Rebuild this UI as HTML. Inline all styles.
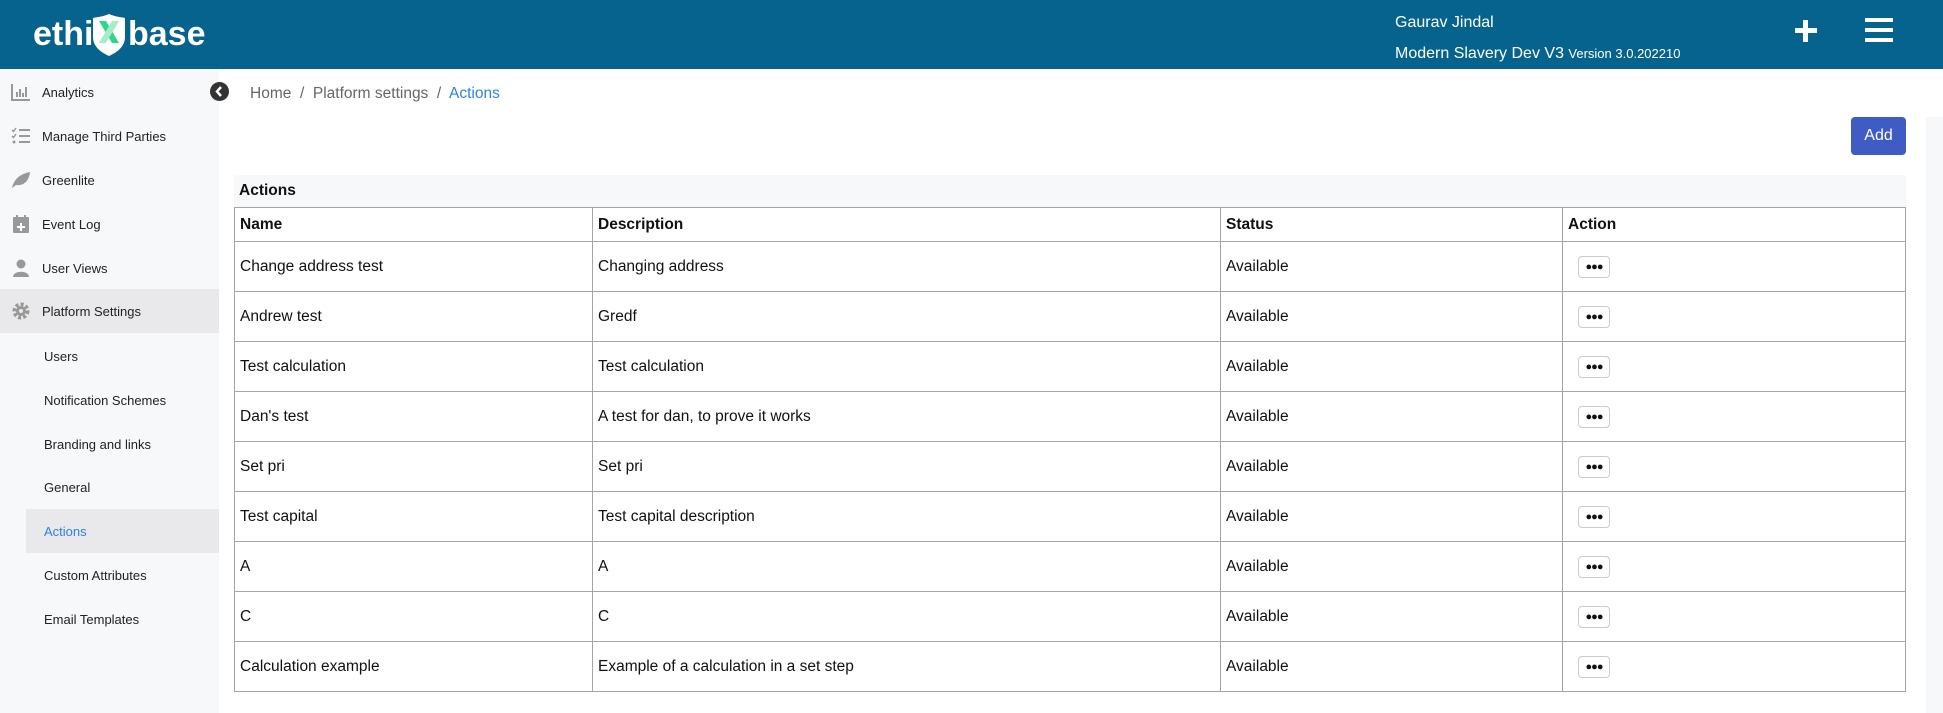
<!DOCTYPE html>
<html><head><meta charset="utf-8"><style>
*{margin:0;padding:0;box-sizing:border-box}
body{width:1943px;height:713px;overflow:hidden;background:#fff;font-family:"Liberation Sans",sans-serif;position:relative;color:#111}
.hdr{position:absolute;left:0;top:0;width:1943px;height:69px;background:#05638e}
.logo{position:absolute;top:17px;line-height:34px;font:bold 34px/34px "Liberation Sans",sans-serif;color:#fff}
.side{position:absolute;left:0;top:69px;width:219px;height:644px;background:#f7f8fa}
.it{position:absolute;left:0;width:219px;height:44px;font-size:13px;color:#222;display:flex;align-items:center;padding-left:42px}
.ic{position:absolute;left:11px;top:13px;width:20px;height:18px}
.sub{position:absolute;left:26px;width:193px;height:44px;font-size:13px;color:#222;display:flex;align-items:center;padding-left:18px}
table{position:absolute;left:234px;top:207px;width:1672px;border-collapse:collapse;font-size:15.5px}
td,th{border:1px solid #a5a5a5;text-align:left;padding:0 5px;vertical-align:middle}
th{height:34px;font-weight:bold}
td{height:50px}
.dots{display:inline-block;width:32px;height:22px;border:1px solid #ccc;border-radius:4px;text-align:center;font-size:11px;line-height:20px;margin-left:10px;letter-spacing:-1px}
</style></head><body>
<div class="hdr">
<div class="logo" style="left:33px">ethi</div>
<svg style="position:absolute;left:92px;top:13px" width="34" height="44" viewBox="0 0 34 44"><path d="M17 1 C10 4 5 4 1 5 V24 C1 33 8 39 17 43 C26 39 33 33 33 24 V5 C29 4 24 4 17 1Z" fill="#fff"/><path d="M7 8 L14 8 L27 30 L20 30Z" fill="#2fd68a"/><path d="M20 8 L27 8 L14 30 L7 30Z" fill="#a5ecc9"/></svg>
<div class="logo" style="left:128px">base</div>
<div style="position:absolute;left:1395px;top:14px;color:#fff;font-size:16px">Gaurav Jindal</div>
<div style="position:absolute;left:1395px;top:45px;color:#fff;font-size:16px">Modern Slavery Dev V3 <span style="font-size:13px">Version 3.0.202210</span></div>
<div style="position:absolute;left:1795px;top:20px;width:22px;height:22px"><div style="position:absolute;left:8px;top:0;width:5px;height:22px;background:#fff"></div><div style="position:absolute;left:0;top:8px;width:22px;height:5px;background:#fff"></div></div>
<div style="position:absolute;left:1865px;top:18px;width:28px;height:25px"><div style="height:4px;background:#fff;margin-bottom:6px"></div><div style="height:4px;background:#fff;margin-bottom:6px"></div><div style="height:4px;background:#fff"></div></div>
</div>
<div class="side">
<div class="it" style="top:1px"><svg class="ic" viewBox="0 0 20 18"><path d="M1 1V17H19" stroke="#999" stroke-width="2" fill="none"/><path d="M6 14V9M9 14V6M12 14V10M15 14V4" stroke="#999" stroke-width="2"/></svg>Analytics</div>
<div class="it" style="top:45px"><svg class="ic" viewBox="0 0 20 18"><path d="M1 3l1.5 1.5L5 1M1 9l1.5 1.5L5 7" stroke="#999" stroke-width="1.5" fill="none"/><circle cx="3" cy="15" r="1.5" fill="#999"/><path d="M8 3H19M8 9H19M8 15H19" stroke="#999" stroke-width="2"/></svg>Manage Third Parties</div>
<div class="it" style="top:89px"><svg class="ic" viewBox="0 0 20 18"><path d="M1 17C3 8 9 3 19 1C18 10 13 15 5 14Z" fill="#999"/></svg>Greenlite</div>
<div class="it" style="top:133px"><svg class="ic" viewBox="0 0 20 18"><rect x="2" y="2" width="16" height="16" rx="1" fill="#999"/><rect x="5" y="0" width="2" height="4" fill="#999"/><rect x="13" y="0" width="2" height="4" fill="#999"/><path d="M10 8V16M6 12H14" stroke="#fff" stroke-width="2"/></svg>Event Log</div>
<div class="it" style="top:177px"><svg class="ic" viewBox="0 0 20 18"><circle cx="10" cy="5" r="4.5" fill="#999"/><path d="M2 18C2 11 18 11 18 18Z" fill="#999"/></svg>User Views</div>
<div class="it" style="top:220px;background:#e9e9eb"><svg class="ic" viewBox="0 0 20 18"><circle cx="10" cy="9" r="6.5" fill="none" stroke="#999" stroke-width="4" stroke-dasharray="3 2"/><circle cx="10" cy="9" r="5" fill="#999"/><circle cx="10" cy="9" r="2" fill="#e9e9eb"/></svg>Platform Settings</div>
<div class="sub" style="top:265px">Users</div>
<div class="sub" style="top:309px">Notification Schemes</div>
<div class="sub" style="top:353px">Branding and links</div>
<div class="sub" style="top:396px">General</div>
<div class="sub" style="top:440px;background:#e9e9eb;color:#2f80ed">Actions</div>
<div class="sub" style="top:484px">Custom Attributes</div>
<div class="sub" style="top:528px">Email Templates</div>
</div>
<svg style="position:absolute;left:210px;top:82px" width="19" height="19" viewBox="0 0 19 19"><circle cx="9.5" cy="9.5" r="9.5" fill="#333"/><path d="M11 5L7 9.5L11 14" stroke="#fff" stroke-width="2.5" fill="none"/></svg>
<div style="position:absolute;left:250px;top:85px;font-size:15.5px;color:#666">Home &nbsp;/&nbsp; Platform settings &nbsp;/&nbsp; <span style="color:#2f80ed">Actions</span></div>
<div style="position:absolute;left:1851px;top:117px;width:55px;height:38px;background:#3f5bc4;border-radius:4px;color:#fff;font-size:16px;text-align:center;line-height:38px">Add</div>
<div style="position:absolute;left:1926px;top:117px;width:17px;height:596px;background:#f7f8fa"></div>
<div style="position:absolute;left:234px;top:175px;width:1672px;height:32px;background:#f7f8fa;font-weight:bold;font-size:15.5px;padding:7px 5px">Actions</div>
<table>
<tr><th style="width:358px">Name</th><th style="width:628px">Description</th><th style="width:342px">Status</th><th>Action</th></tr>
<tr><td>Change address test</td><td>Changing address</td><td>Available</td><td><span class="dots">●●●</span></td></tr>
<tr><td>Andrew test</td><td>Gredf</td><td>Available</td><td><span class="dots">●●●</span></td></tr>
<tr><td>Test calculation</td><td>Test calculation</td><td>Available</td><td><span class="dots">●●●</span></td></tr>
<tr><td>Dan's test</td><td>A test for dan, to prove it works</td><td>Available</td><td><span class="dots">●●●</span></td></tr>
<tr><td>Set pri</td><td>Set pri</td><td>Available</td><td><span class="dots">●●●</span></td></tr>
<tr><td>Test capital</td><td>Test capital description</td><td>Available</td><td><span class="dots">●●●</span></td></tr>
<tr><td>A</td><td>A</td><td>Available</td><td><span class="dots">●●●</span></td></tr>
<tr><td>C</td><td>C</td><td>Available</td><td><span class="dots">●●●</span></td></tr>
<tr><td>Calculation example</td><td>Example of a calculation in a set step</td><td>Available</td><td><span class="dots">●●●</span></td></tr>
</table>
</body></html>
